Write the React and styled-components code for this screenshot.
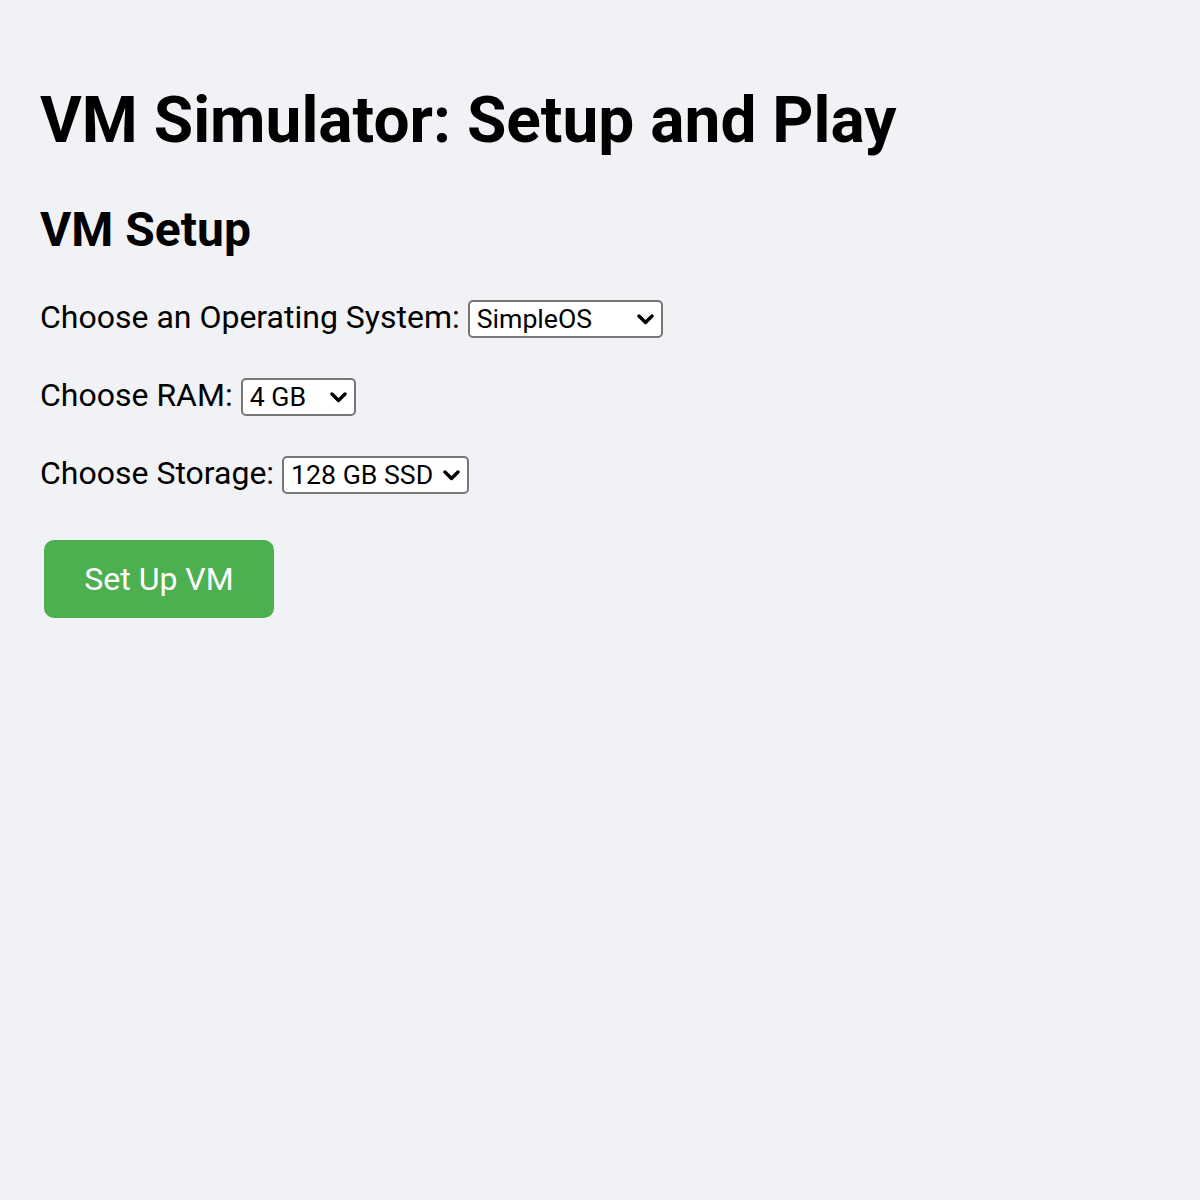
import React, { useState } from "react";
import styled, { createGlobalStyle } from "styled-components";

const Global = createGlobalStyle`
  html, body { margin: 0; padding: 0; background: #f0f2f5; }
  body {
    font-family: Roboto, "Noto Sans", Arial, sans-serif;
    color: #000;
    font-size: 32px;
  }
`;

const Page = styled.div`
  padding: 40px;
`;

const Title = styled.h1`
  font-size: 64px;
  font-weight: 700;
  margin: 43px 0;
`;

const Section = styled.h2`
  font-size: 48px;
  font-weight: 700;
  margin: 40px 0;
`;

const Row = styled.div`
  display: flex;
  align-items: baseline;
  gap: 8px;
  height: 38px;
  margin-bottom: 40px;
`;

const Label = styled.label`
  font-size: 32px;
  line-height: normal;
  color: #000;
`;

const SelectWrap = styled.span`
  position: relative;
  display: inline-flex;
  align-self: flex-start;
  margin-top: 2px;
`;

const Select = styled.select`
  appearance: none;
  -webkit-appearance: none;
  box-sizing: border-box;
  width: ${(p) => p.$w}px;
  height: 38px;
  padding: 0 30px 0 7px;
  border: 2px solid #767676;
  border-radius: 5px;
  background: #fff;
  color: #000;
  font-family: Roboto, "Noto Sans", Arial, sans-serif;
  font-size: 26.67px;
  line-height: normal;
  outline: none;
`;

const Chevron = styled.svg`
  position: absolute;
  right: 9px;
  top: 50%;
  transform: translateY(-45%);
  width: 17px;
  height: 11px;
  pointer-events: none;
`;

const Button = styled.button`
  margin: 8px 0 0 4px;
  padding: 20px 40px;
  min-width: 230px;
  border: none;
  border-radius: 10px;
  background: #4caf50;
  color: #fff;
  font-family: Roboto, "Noto Sans", Arial, sans-serif;
  font-size: 32px;
  line-height: normal;
  cursor: pointer;
`;

function Dropdown({ width, options, value, onChange, id }) {
  return (
    <SelectWrap>
      <Select id={id} $w={width} value={value} onChange={(e) => onChange(e.target.value)}>
        {options.map((o) => (
          <option key={o} value={o}>
            {o}
          </option>
        ))}
      </Select>
      <Chevron viewBox="0 0 17 11" fill="none">
        <path d="M2 2 L8.5 8.5 L15 2" stroke="#000" strokeWidth="3.4" strokeLinecap="round" strokeLinejoin="round" />
      </Chevron>
    </SelectWrap>
  );
}

export default function App() {
  const [os, setOs] = useState("SimpleOS");
  const [ram, setRam] = useState("4 GB");
  const [storage, setStorage] = useState("128 GB SSD");
  return (
    <>
      <Global />
      <Page>
        <Title>VM Simulator: Setup and Play</Title>
        <Section>VM Setup</Section>
        <Row>
          <Label htmlFor="os">Choose an Operating System:</Label>
          <Dropdown id="os" width={195} options={["SimpleOS", "AdvancedOS", "RetroOS"]} value={os} onChange={setOs} />
        </Row>
        <Row>
          <Label htmlFor="ram">Choose RAM:</Label>
          <Dropdown id="ram" width={115} options={["2 GB", "4 GB", "8 GB", "16 GB"]} value={ram} onChange={setRam} />
        </Row>
        <Row>
          <Label htmlFor="storage">Choose Storage:</Label>
          <Dropdown id="storage" width={187} options={["64 GB SSD", "128 GB SSD", "256 GB SSD"]} value={storage} onChange={setStorage} />
        </Row>
        <Button>Set Up VM</Button>
      </Page>
    </>
  );
}
